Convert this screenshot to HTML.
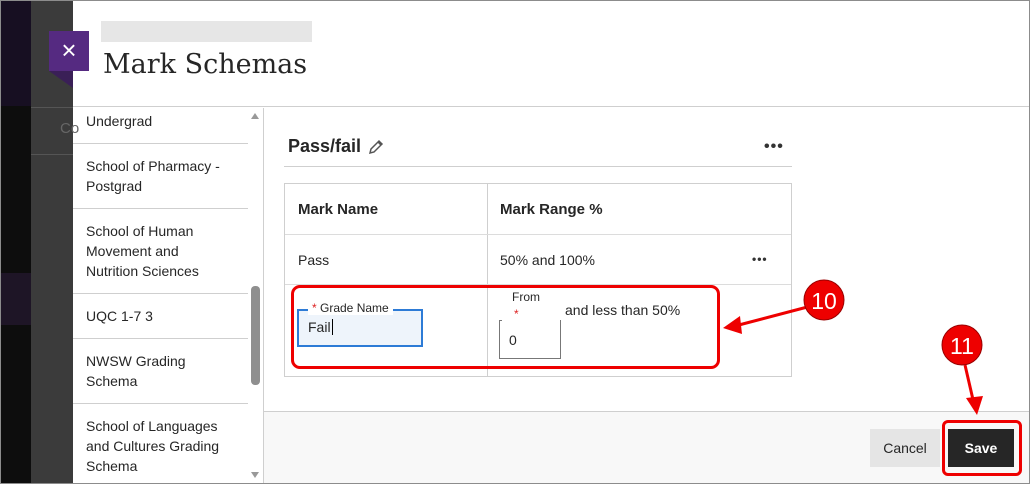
<!DOCTYPE html>
<html><head><style>
*{margin:0;padding:0;box-sizing:border-box}
body{width:1030px;height:484px;overflow:hidden;position:relative;font-family:"Liberation Sans",sans-serif;background:#fff;color:#262626}
.abs{position:absolute}
</style></head><body>
<div class="abs" style="left:0;top:0;width:1030px;height:484px;border:1px solid #8c8c8c;z-index:50;pointer-events:none"></div>
<div class="abs" style="left:0;top:0;width:31px;height:484px;background:#0d0d0d"></div>
<div class="abs" style="left:0;top:0;width:31px;height:106px;background:#170f22"></div>
<div class="abs" style="left:0;top:273px;width:31px;height:52px;background:#1e1526"></div>
<div class="abs" style="left:31px;top:0;width:42px;height:484px;background:#3b3b3b"></div>
<div class="abs" style="left:31px;top:107px;width:42px;height:1px;background:#555"></div>
<div class="abs" style="left:31px;top:154px;width:42px;height:1px;background:#555"></div>
<div class="abs" style="left:60px;top:120px;color:#666;font-size:15px">Co</div>
<div class="abs" style="left:73px;top:0;width:957px;height:107px;background:#fff;border-bottom:1px solid #cfcfcf"></div>
<div class="abs" style="left:101px;top:21px;width:211px;height:21px;background:#e6e6e6"></div>
<div class="abs" style="left:103px;top:49px;font-family:'DejaVu Serif',serif;font-size:27px;color:#262626;white-space:nowrap">Mark Schemas</div>
<div class="abs" style="left:49px;top:71px;width:0;height:0;border-left:24px solid transparent;border-top:17px solid #3a1f57"></div>
<div class="abs" style="left:49px;top:31px;width:40px;height:40px;background:#552a81;color:#fff;font-size:26px;text-align:center;line-height:38px">×</div>
<div class="abs" style="left:73px;top:108px;width:175px;height:376px;overflow:hidden;font-size:14px;line-height:20px;color:#262626">
 <div style="position:absolute;top:3px;left:13px">Undergrad</div>
 <div style="position:absolute;top:35px;left:0;width:175px;border-top:1px solid #cfcfcf"></div>
 <div style="position:absolute;top:48px;left:13px">School of Pharmacy -<br>Postgrad</div>
 <div style="position:absolute;top:100px;left:0;width:175px;border-top:1px solid #cfcfcf"></div>
 <div style="position:absolute;top:113px;left:13px">School of Human<br>Movement and<br>Nutrition Sciences</div>
 <div style="position:absolute;top:185px;left:0;width:175px;border-top:1px solid #cfcfcf"></div>
 <div style="position:absolute;top:198px;left:13px">UQC 1-7 3</div>
 <div style="position:absolute;top:230px;left:0;width:175px;border-top:1px solid #cfcfcf"></div>
 <div style="position:absolute;top:243px;left:13px">NWSW Grading<br>Schema</div>
 <div style="position:absolute;top:295px;left:0;width:175px;border-top:1px solid #cfcfcf"></div>
 <div style="position:absolute;top:308px;left:13px">School of Languages<br>and Cultures Grading<br>Schema</div>
</div>
<div class="abs" style="left:248px;top:108px;width:15px;height:376px;background:#fff"></div>
<div class="abs" style="left:251px;top:113px;width:0;height:0;border-left:4px solid transparent;border-right:4px solid transparent;border-bottom:6px solid #999"></div>
<div class="abs" style="left:251px;top:472px;width:0;height:0;border-left:4px solid transparent;border-right:4px solid transparent;border-top:6px solid #999"></div>
<div class="abs" style="left:251px;top:286px;width:9px;height:99px;border-radius:4px;background:#8f8f8f"></div>
<div class="abs" style="left:263px;top:108px;width:1px;height:376px;background:#cfcfcf"></div>
<div class="abs" style="left:288px;top:136px;font-size:18px;font-weight:bold;color:#262626">Pass/fail</div>
<svg class="abs" style="left:368px;top:139px" width="16" height="16" viewBox="0 0 16 16"><path d="M2 14 L3 10 L11 2 L14 5 L6 13 Z M10 3 L13 6" fill="none" stroke="#555" stroke-width="1.5"/></svg>
<div class="abs" style="left:764px;top:138px;font-size:16px;font-weight:bold;letter-spacing:1px;color:#333">•••</div>
<div class="abs" style="left:284px;top:166px;width:508px;height:1px;background:#cfcfcf"></div>
<div class="abs" style="left:284px;top:183px;width:508px;height:194px;border:1px solid #cfcfcf"></div>
<div class="abs" style="left:487px;top:183px;width:1px;height:194px;background:#cfcfcf"></div>
<div class="abs" style="left:285px;top:234px;width:506px;height:1px;background:#dcdcdc"></div>
<div class="abs" style="left:285px;top:284px;width:506px;height:1px;background:#dcdcdc"></div>
<div class="abs" style="left:298px;top:201px;font-size:15px;font-weight:bold">Mark Name</div>
<div class="abs" style="left:500px;top:201px;font-size:15px;font-weight:bold">Mark Range %</div>
<div class="abs" style="left:298px;top:252px;font-size:14px">Pass</div>
<div class="abs" style="left:500px;top:252px;font-size:14px">50% and 100%</div>
<div class="abs" style="left:752px;top:252px;font-size:12px;font-weight:bold;letter-spacing:1px;color:#333">•••</div>
<div class="abs" style="left:297px;top:309px;width:126px;height:38px;border:2px solid #2d7bd6;background:#eef4fb"></div>
<div class="abs" style="left:308px;top:301px;background:#fff;font-size:12px;padding:0 4px"><span style="color:#d22">*</span> Grade Name</div>
<div class="abs" style="left:308px;top:319px;font-size:14px">Fail<span style="border-left:1px solid #000;margin-left:1px"></span></div>
<div class="abs" style="left:512px;top:290px;font-size:12px">From</div>
<div class="abs" style="left:514px;top:307px;font-size:12px;color:#d22">*</div>
<div class="abs" style="left:499px;top:320px;width:62px;height:39px;border:1px solid #777;border-top:none"></div>
<div class="abs" style="left:499px;top:320px;width:3px;height:1px;background:#777"></div>
<div class="abs" style="left:509px;top:332px;font-size:14px">0</div>
<div class="abs" style="left:565px;top:302px;font-size:14px">and less than 50%</div>
<div class="abs" style="left:264px;top:411px;width:766px;height:73px;background:#f8f8f8;border-top:1px solid #cfcfcf"></div>
<div class="abs" style="left:870px;top:429px;width:70px;height:38px;background:#e5e5e5;font-size:14px;text-align:center;line-height:38px">Cancel</div>
<div class="abs" style="left:948px;top:429px;width:66px;height:38px;background:#262626;color:#fff;font-weight:bold;font-size:14px;text-align:center;line-height:38px">Save</div>
<div class="abs" style="left:291px;top:285px;width:429px;height:84px;border:3px solid #e00;border-radius:9px"></div>
<div class="abs" style="left:942px;top:420px;width:80px;height:56px;border:3px solid #e00;border-radius:6px"></div>
<svg class="abs" style="left:0;top:0" width="1030" height="484">
<line x1="815" y1="305" x2="735" y2="326" stroke="#e00" stroke-width="3"/>
<path d="M723 328 L740 316 L742 334 Z" fill="#e00"/>
<line x1="965" y1="365" x2="974" y2="404" stroke="#e00" stroke-width="3"/>
<path d="M977 415 L966 398 L983 396 Z" fill="#e00"/>
<circle cx="824" cy="300" r="20" fill="#e00" stroke="#900" stroke-width="1"/>
<circle cx="962" cy="345" r="20" fill="#e00" stroke="#900" stroke-width="1"/>
<text x="824" y="309" font-family="Liberation Sans" font-size="23" fill="#fff" text-anchor="middle">10</text>
<text x="962" y="354" font-family="Liberation Sans" font-size="23" fill="#fff" text-anchor="middle">11</text>
</svg>
</body></html>
